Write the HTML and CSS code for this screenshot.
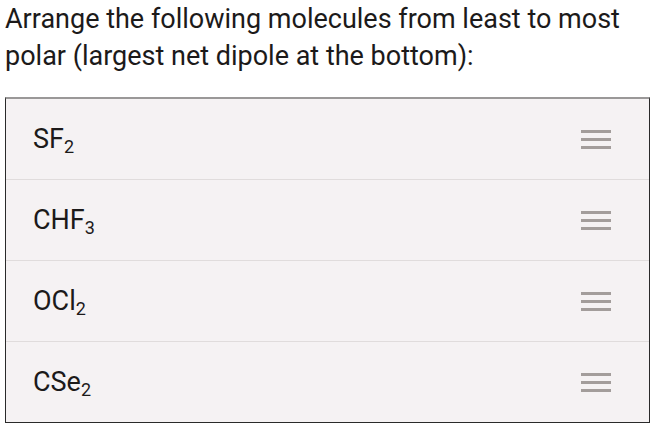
FILE: index.html
```html
<!DOCTYPE html>
<html>
<head>
<meta charset="utf-8">
<link rel="stylesheet" href="styles.css">
</head>
<body>
<div class="page">
  <p class="prompt">Arrange the following molecules from least to most polar (largest net dipole at the bottom):</p>
  <ul class="list">
    <li class="item"><span class="label">SF<sub>2</sub></span><span class="handle"><i></i><i></i><i></i></span></li>
    <li class="item"><span class="label">CHF<sub>3</sub></span><span class="handle"><i></i><i></i><i></i></span></li>
    <li class="item"><span class="label">OCl<sub>2</sub></span><span class="handle"><i></i><i></i><i></i></span></li>
    <li class="item"><span class="label">CSe<sub>2</sub></span><span class="handle"><i></i><i></i><i></i></span></li>
  </ul>
</div>
</body>
</html>
```
FILE: styles.css
```css
html, body {
  margin: 0;
  padding: 0;
  background: #ffffff;
}
.page {
  padding: 0 5px 0 5px;
  font-family: Roboto, "Noto Sans", sans-serif;
  color: #1c1a1a;
}
.prompt {
  margin: 0;
  padding-top: 1px;
  font-size: 27px;
  line-height: 37px;
}
.list {
  list-style: none;
  margin: 22px 0 0 0;
  padding: 0;
  width: 643px;
  border: 1px solid #2a2a2a;
  border-top: 2px solid #9a9898;
  background: #f5f2f3;
}
.item {
  display: flex;
  align-items: center;
  justify-content: space-between;
  height: 80px;
  padding: 0 38px 0 27px;
  border-top: 1px solid #e0dcdc;
}
.item:first-child {
  border-top: none;
}
.label {
  font-size: 27px;
}
.label sub {
  font-size: 18px;
  vertical-align: -5px;
  line-height: 0;
}
.handle {
  display: flex;
  flex-direction: column;
  gap: 5px;
  width: 30px;
}
.handle i {
  display: block;
  height: 3px;
  background: #a39d9b;
}
```
